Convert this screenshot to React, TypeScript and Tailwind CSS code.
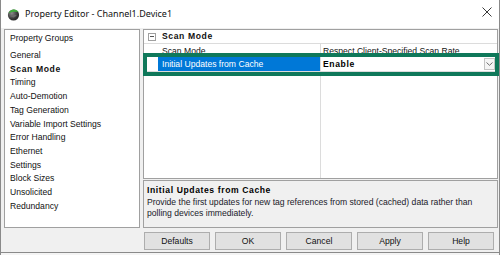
import React from "react";

const groups = [
  "General",
  "Scan Mode",
  "Timing",
  "Auto-Demotion",
  "Tag Generation",
  "Variable Import Settings",
  "Error Handling",
  "Ethernet",
  "Settings",
  "Block Sizes",
  "Unsolicited",
  "Redundancy",
];

function AppIcon() {
  return (
    <svg width="13" height="13" viewBox="0 0 13 13">
      <defs>
        <radialGradient id="g1" cx="0.35" cy="0.35" r="0.8">
          <stop offset="0" stopColor="#8a8a8a" />
          <stop offset="0.6" stopColor="#3a3a3a" />
          <stop offset="1" stopColor="#1e1e1e" />
        </radialGradient>
      </defs>
      <circle cx="6.5" cy="7" r="5.6" fill="url(#g1)" />
      <path d="M1.6 5.2 C2.6 2.2 5.6 0.9 8.6 1.7 C10 2.1 11 3 11.6 4 C9 3.4 5 3.6 1.6 5.2 Z" fill="#3fae3c" />
      <path d="M3.2 8.2 L6.4 6.6 L9.8 7.6 L6.6 9.4 Z" fill="#6a6a6a" />
    </svg>
  );
}

export default function App() {
  const font = { fontFamily: '"Liberation Sans", Arial, sans-serif' };
  return (
    <div
      className="w-[500px] h-[255px] overflow-hidden flex flex-col bg-[#f0f0f0] border-x border-[#8a8a8a] text-[8.6px] text-[#111]"
      style={font}
    >
      {/* Title bar */}
      <div className="h-[28px] shrink-0 bg-white flex items-center pl-[6px] pr-[7px]">
        <AppIcon />
        <span
          className="ml-[5px] text-[9px] text-[#111]"
          style={{ fontFamily: '"Noto Sans", "Open Sans", sans-serif' }}
        >
          Property Editor - Channel1.Device1
        </span>
        <div className="flex-1" />
        <svg width="10" height="10" viewBox="0 0 10 10" className="mt-[-4px]">
          <path d="M0.5 0.5 L9.5 9.5 M9.5 0.5 L0.5 9.5" stroke="#222" strokeWidth="0.9" />
        </svg>
      </div>

      {/* Body */}
      <div className="flex flex-col pt-[1px] pl-[3px] pr-[1px]">
        <div className="flex gap-[3px] h-[199px]">
          {/* Left panel */}
          <div className="w-[136px] h-full bg-white border border-[#a0a0a0] pt-[2px] pl-[5px] leading-[13.7px]">
            <div>Property Groups</div>
            <div className="mt-[3.3px]">
              {groups.map((g) => (
                <div
                  key={g}
                  className={g === "Scan Mode" ? "font-bold tracking-[0.6px]" : ""}
                >
                  {g}
                </div>
              ))}
            </div>
          </div>

          {/* Right column */}
          <div className="w-[355px] flex flex-col">
            {/* Grid */}
            <div className="relative h-[150px] bg-white border border-[#a0a0a0] flex flex-col">
              {/* header row */}
              <div className="h-[14px] flex items-center border-b border-[#dcdcdc]">
                <div className="w-[14px] h-full flex items-center justify-center">
                  <div className="w-[8px] h-[8px] border border-[#a0a0a0] flex items-center justify-center ml-[1px]">
                    <div className="w-[4px] h-px bg-[#555]" />
                  </div>
                </div>
                <div className="pl-[4px] font-bold tracking-[0.6px]">Scan Mode</div>
              </div>
              {/* row 1 */}
              <div className="h-[13px] flex border-b border-[#dcdcdc]">
                <div className="w-[14px]" />
                <div className="w-[162px] pl-[4px] pt-[2px] flex items-center overflow-hidden whitespace-nowrap">
                  Scan Mode
                </div>
                <div className="flex-1 border-l border-[#dcdcdc] pl-[2px] pt-[2px] flex items-center overflow-hidden whitespace-nowrap">
                  Respect Client-Specified Scan Rate
                </div>
              </div>
              {/* selected row */}
              <div className="h-[15px] flex border-b border-[#dcdcdc]">
                <div className="w-[14px]" />
                <div className="w-[162px] pl-[4px] bg-[#0078d7] text-white flex items-center overflow-hidden whitespace-nowrap">
                  Initial Updates from Cache
                </div>
                <div className="flex-1 border-l border-[#dcdcdc] pl-[2px] flex items-center">
                  <span className="font-bold tracking-[0.6px] text-black">Enable</span>
                  <div className="flex-1" />
                  <div className="w-[11px] h-[12px] mr-[2px] border border-[#c4c4c4] bg-[#f5f5f5] flex items-center justify-center">
                    <svg width="7" height="4" viewBox="0 0 7 4">
                      <path d="M0.5 0.5 L3.5 3.3 L6.5 0.5" fill="none" stroke="#606060" strokeWidth="0.9" />
                    </svg>
                  </div>
                </div>
              </div>
              {/* filler */}
              <div className="flex-1 flex">
                <div className="w-[176px]" />
                <div className="flex-1 border-l border-[#dcdcdc]" />
              </div>

              {/* annotation box */}
              <div className="absolute left-[-1px] top-[23px] w-[356px] h-[23px] border-[4px] border-[#0f785a]" />
            </div>

            {/* Description */}
            <div className="mt-[1px] h-[48px] border border-[#a0a0a0] bg-[#f0f0f0] pl-[3px] pt-[4px] leading-[11px]">
              <div className="font-bold tracking-[0.6px] text-black">Initial Updates from Cache</div>
              <div className="text-[#1a1a2a] mt-[1px]">
                Provide the first updates for new tag references from stored (cached) data rather than
                <br />
                polling devices immediately.
              </div>
            </div>
          </div>
        </div>

        {/* Buttons */}
        <div className="flex gap-[5px] pl-[140px] mt-[4px]">
          {["Defaults", "OK", "Cancel", "Apply", "Help"].map((b) => (
            <div
              key={b}
              className="w-[66px] h-[18px] bg-[#e1e1e1] border border-[#adadad] flex items-center justify-center text-[#111]"
            >
              {b}
            </div>
          ))}
        </div>
      </div>
      <div className="mt-[2px] border-t border-[#8a8a8a] flex-1 bg-[#f4f4f4]" />
    </div>
  );
}
